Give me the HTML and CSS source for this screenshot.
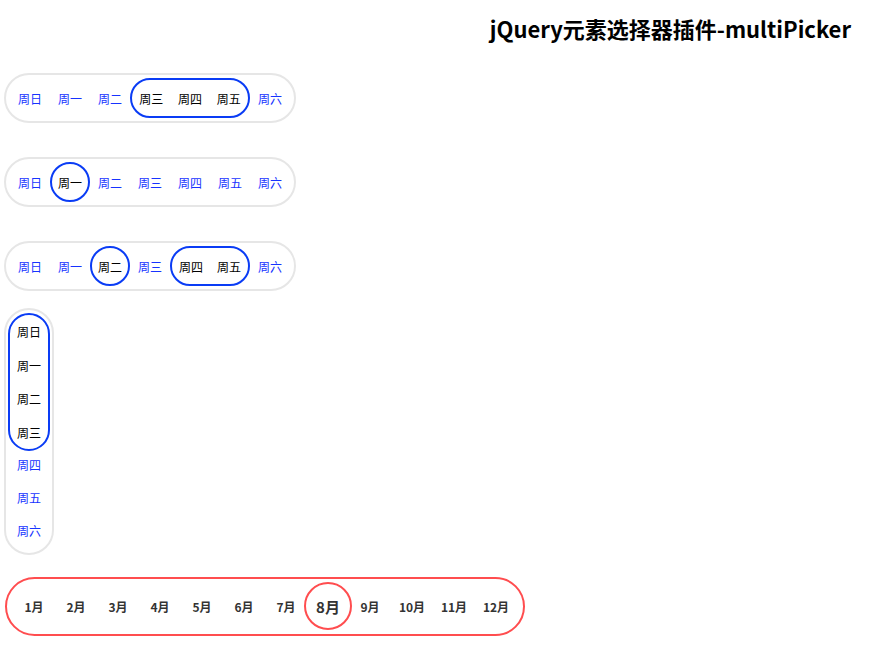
FILE: index.html
```html
<!DOCTYPE html>
<html lang="zh-CN">
<head>
<meta charset="utf-8">
<title>jQuery元素选择器插件-multiPicker</title>
<link rel="stylesheet" href="styles.css">
</head>
<body>
<div class="page">
  <header class="header">
    <h1 class="title">jQuery元素选择器插件-multiPicker</h1>
  </header>

  <div class="picker row r1">
    <span class="item">周日</span>
    <span class="item">周一</span>
    <span class="item">周二</span>
    <span class="grp g3">
      <span class="item">周三</span>
      <span class="item">周四</span>
      <span class="item">周五</span>
    </span>
    <span class="item">周六</span>
  </div>

  <div class="picker row r2">
    <span class="item">周日</span>
    <span class="grp g1"><span class="item">周一</span></span>
    <span class="item">周二</span>
    <span class="item">周三</span>
    <span class="item">周四</span>
    <span class="item">周五</span>
    <span class="item">周六</span>
  </div>

  <div class="picker row r3">
    <span class="item">周日</span>
    <span class="item">周一</span>
    <span class="grp g1"><span class="item">周二</span></span>
    <span class="item">周三</span>
    <span class="grp g2">
      <span class="item">周四</span>
      <span class="item">周五</span>
    </span>
    <span class="item">周六</span>
  </div>

  <div class="picker col">
    <span class="grp">
      <span class="item">周日</span>
      <span class="item">周一</span>
      <span class="item">周二</span>
      <span class="item">周三</span>
    </span>
    <span class="item">周四</span>
    <span class="item">周五</span>
    <span class="item">周六</span>
  </div>

  <div class="months">
    <span class="m">1月</span>
    <span class="m">2月</span>
    <span class="m">3月</span>
    <span class="m">4月</span>
    <span class="m">5月</span>
    <span class="m">6月</span>
    <span class="m">7月</span>
    <span class="m sel">8月</span>
    <span class="m">9月</span>
    <span class="m">10月</span>
    <span class="m">11月</span>
    <span class="m">12月</span>
  </div>
</div>
</body>
</html>
```

FILE: styles.css
```css
html, body {
  margin: 0;
  padding: 0;
  background: #fff;
}
body {
  font-family: "Noto Sans CJK SC", "Noto Sans", sans-serif;
}
.page {
  padding-left: 4px;
  display: flex;
  flex-direction: column;
  align-items: flex-start;
}
.header {
  align-self: stretch;
  height: 56px;
  display: flex;
  align-items: center;
  justify-content: flex-end;
  padding-right: 26px;
}
.title {
  margin: 0;
  font-size: 22px;
  font-weight: 700;
  color: #000;
  line-height: 1;
  letter-spacing: 0;
}
.picker {
  border: 2px solid #e6e6e6;
  background: #fff;
  display: flex;
  box-sizing: border-box;
}
.row {
  flex-direction: row;
  padding: 3px 4px;
  border-radius: 25px;
}
.r1 { margin-top: 17px; }
.r2 { margin-top: 34px; }
.r3 { margin-top: 34px; }
.item {
  font-size: 12px;
  color: #1733ff;
  display: flex;
  align-items: center;
  justify-content: center;
  box-sizing: border-box;
  flex: none;
}
.row .item {
  width: 40px;
  height: 40px;
}
.grp {
  display: flex;
  flex: none;
  border: 2px solid #0a3cf5;
  border-radius: 20px;
  box-sizing: border-box;
}
.grp .item {
  color: #000;
}
.row .grp {
  height: 40px;
}
.row .grp .item {
  width: auto;
  flex: 1 1 0;
  height: 36px;
}
.g1 { width: 40px; }
.g2 { width: 80px; }
.g3 { width: 120px; }

.col {
  margin-top: 17px;
  flex-direction: column;
  padding: 3px 2px;
  border-radius: 25px;
}
.col .grp {
  flex-direction: column;
  width: 42px;
  border-radius: 21px;
}
.col .grp .item {
  height: 33.5px;
  width: 38px;
  padding: 0;
}
.col .item {
  width: 42px;
  height: 33px;
  padding-bottom: 6px;
}

.months {
  margin-top: 22px;
  margin-left: 1px;
  display: flex;
  border: 2px solid #ff4d4f;
  border-radius: 30px;
  padding: 3px 6px 4px;
}
.m {
  width: 42px;
  height: 48px;
  display: flex;
  align-items: center;
  justify-content: center;
  font-size: 12px;
  font-weight: 700;
  color: #333;
  box-sizing: border-box;
}
.m.sel {
  width: 48px;
  margin: 0 -3px;
  border: 2px solid #ff4d4f;
  border-radius: 50%;
  font-size: 15px;
}
```
